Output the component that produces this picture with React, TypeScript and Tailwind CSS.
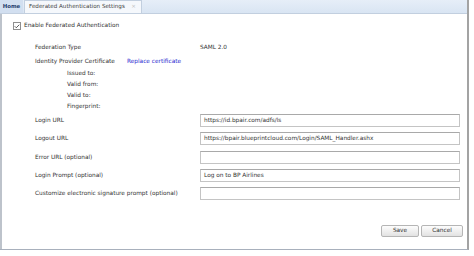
import { Check } from "lucide-react";

const labels = ["Issued to:", "Valid from:", "Valid to:", "Fingerprint:"];

const fields = [
  { label: "Login URL", value: "https://id.bpair.com/adfs/ls", mt: "mt-[2px]" },
  { label: "Logout URL", value: "https://bpair.blueprintcloud.com/Login/SAML_Handler.ashx", mt: "mt-[5px]" },
  { label: "Error URL (optional)", value: "", mt: "mt-[6px]" },
  { label: "Login Prompt (optional)", value: "Log on to BP Airlines", mt: "mt-[5px]" },
  { label: "Customize electronic signature prompt (optional)", value: "", mt: "mt-[5px]" },
];

function FieldRow({ label, value, mt }: { label: string; value: string; mt: string }) {
  return (
    <div className={`flex items-center h-[13px] ${mt}`}>
      <div className="w-[198px] pl-[33px] shrink-0 whitespace-nowrap">{label}</div>
      <div className="w-[260px] h-[13px] border border-[#c4c4c4] border-t-[#a9a9a9] bg-white flex items-center px-[3px] text-[#333]">
        {value}
      </div>
    </div>
  );
}

function Btn({ children, w }: { children: string; w: string }) {
  return (
    <div
      className={`${w} h-[12px] rounded-[2px] border border-[#b5b5b5] bg-gradient-to-b from-[#fdfdfd] to-[#e2e2e2] flex items-center justify-center text-[#333]`}
    >
      {children}
    </div>
  );
}

export default function App() {
  return (
    <div className="w-[474px] h-[256px] bg-white overflow-hidden font-['DejaVu_Sans',Verdana,sans-serif] text-[5.8px] text-[#333] leading-none">
      <div className="w-[469px] h-[250px] flex flex-col border-r-2 border-[#a3a3a3] border-b border-b-[#a8b0bc]">
        {/* tab strip */}
        <div className="h-[14px] flex items-end bg-gradient-to-b from-[#e6eef8] to-[#d9e5f3] border-b border-[#c2cfdf] shrink-0">
          <div className="h-[13px] w-[23px] flex items-center justify-center bg-[#d2dff0] text-[#1d3b6b] font-bold text-[5.4px]">
            Home
          </div>
          <div className="ml-[1px] h-[13px] w-[118px] flex items-center pl-[4px] bg-[#f5f8fc] border border-b-0 border-[#c2cfdf] text-[#404040] whitespace-nowrap text-[5.6px]">
            <span>Federated Authentication Settings</span>
            <span className="ml-auto mr-[5px] text-[#b9b9b9]">×</span>
          </div>
        </div>

        {/* content */}
        <div className="flex-1 flex flex-col border-l-2 border-[#bdc3cb]">
          <div className="flex items-center h-[10px] mt-[7px] pl-[11px]">
            <div className="w-[8px] h-[8px] border border-[#8f8f8f] bg-white flex items-center justify-center">
              <Check size={7} strokeWidth={3} className="text-[#2a2a2a]" />
            </div>
            <span className="ml-[3px]">Enable Federated Authentication</span>
          </div>

          <div className="flex items-center h-[10px] mt-[12px]">
            <div className="w-[198px] pl-[33px]">Federation Type</div>
            <div>SAML 2.0</div>
          </div>

          <div className="flex items-center h-[10px] mt-[4px]">
            <div className="w-[125px] pl-[33px] whitespace-nowrap">Identity Provider Certificate</div>
            <div className="text-[#2b2bd0]">Replace certificate</div>
          </div>

          <div className="flex flex-col mt-[1px]">
            {labels.map((l) => (
              <div key={l} className="h-[11px] flex items-center pl-[65px]">
                {l}
              </div>
            ))}
          </div>

          {fields.map((f) => (
            <FieldRow key={f.label} {...f} />
          ))}

          <div className="flex justify-end gap-[2px] mt-[25px] pr-[4px]">
            <Btn w="w-[38px]">Save</Btn>
            <Btn w="w-[42px]">Cancel</Btn>
          </div>
        </div>
      </div>
    </div>
  );
}
